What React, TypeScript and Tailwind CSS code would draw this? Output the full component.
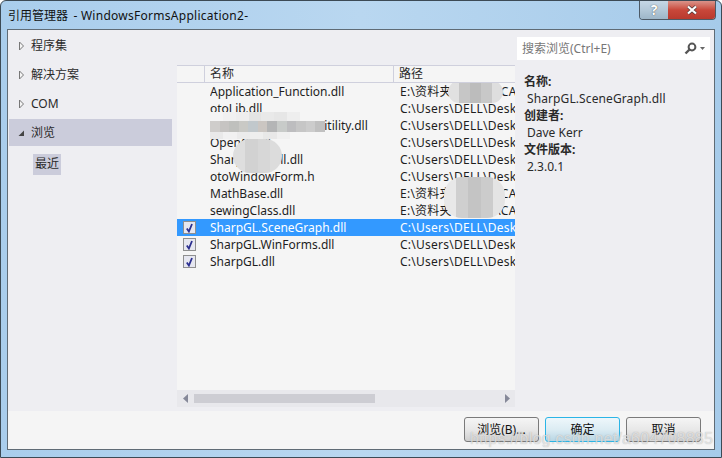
const font = "font-['Noto_Sans','Noto_Sans_CJK_SC',sans-serif]";

type Row = { name: string; path: string; checked?: boolean; selected?: boolean };

const rows: Row[] = [
  { name: "Application_Function.dll", path: "E:\\资料夹\\xxxxxx\\CAD" },
  { name: "otoLib.dll", path: "C:\\Users\\DELL\\Desktop" },
  { name: "xxxxxxxxxxxxxxxxxxitility.dll", path: "C:\\Users\\DELL\\Desktop" },
  { name: "OpenCv.dll", path: "C:\\Users\\DELL\\Desktop" },
  { name: "SharpGLxxxill.dll", path: "C:\\Users\\DELL\\Desktop" },
  { name: "otoWindowForm.h", path: "C:\\Users\\DELL\\Desktop" },
  { name: "MathBase.dll", path: "E:\\资料夹\\xxxxxx\\CAD" },
  { name: "sewingClass.dll", path: "E:\\资料夹\\xxxxxx\\CAD" },
  { name: "SharpGL.SceneGraph.dll", path: "C:\\Users\\DELL\\Desktop", checked: true, selected: true },
  { name: "SharpGL.WinForms.dll", path: "C:\\Users\\DELL\\Desktop", checked: true },
  { name: "SharpGL.dll", path: "C:\\Users\\DELL\\Desktop", checked: true },
];

function Arrow({ open }: { open?: boolean }) {
  return (
    <svg width="7" height="10" viewBox="0 0 7 10" className="shrink-0">
      {open ? (
        <path d="M6 2.5V8H0.5Z" fill="#444" />
      ) : (
        <path d="M1.5 1L5.5 5L1.5 9Z" fill="#f5f5f5" stroke="#777" />
      )}
    </svg>
  );
}

function NavItem({ label, open, active }: { label: string; open?: boolean; active?: boolean }) {
  return (
    <div className={`flex h-[27px] items-center pl-[9px] ${active ? "bg-[#cbccdb]" : ""}`}>
      <Arrow open={open} />
      <span className="ml-[6px] text-[12px] text-[#2a2a2a]">{label}</span>
    </div>
  );
}

function Check() {
  return (
    <span className="flex h-[13px] w-[13px] items-center justify-center border border-[#8f8f8f] bg-[#e6e7f0]">
      <svg width="9" height="10" viewBox="0 0 9 10">
        <path d="M1.8 5.5L3.9 8.5L7 1" fill="none" stroke="#2b2f8f" strokeWidth="1.8" />
      </svg>
    </span>
  );
}

function Mosaic({ className, shades }: { className: string; shades: string[] }) {
  return (
    <div className={`absolute flex overflow-hidden ${className}`}>
      {shades.map((shade, i) => (
        <span key={i} className="h-full flex-1" style={{ background: shade }} />
      ))}
    </div>
  );
}

function DialogButton({ label, primary }: { label: string; primary?: boolean }) {
  return (
    <button
      type="button"
      className={`h-[25px] w-[75px] rounded-[3px] border text-[12px] text-[#111] ${
        primary
          ? "border-[#2bb5e6] bg-gradient-to-b from-[#eef7fb] via-[#dcecf3] to-[#b8d6e4]"
          : "border-[#7a7a7a] bg-gradient-to-b from-[#f5f5f5] via-[#e8e8e8] to-[#cfcfcf]"
      }`}
    >
      {label}
    </button>
  );
}

export default function App() {
  return (
    <div className={`${font} relative flex h-[458px] w-[722px] flex-col overflow-hidden rounded-t-[6px] border border-[#3c4a55] bg-gradient-to-r from-[#a9cdec] via-[#b9d7f0] to-[#a6cbea] px-[6px] pb-[7px]`}>
      {/* title bar */}
      <div className="flex h-[28px] shrink-0 items-start justify-between">
        <span className="mt-[5px] pl-[1px] text-[12px] leading-[20px] text-[#111]">
          引用管理器<span className="ml-[2px] tracking-[0.27px]"> - WindowsFormsApplication2-</span>
        </span>
        <div className="mr-[-1px] flex h-[19px] overflow-hidden rounded-b-[4px] border border-t-0 border-[#4d5a66]">
          <div className="flex w-[28px] items-center justify-center bg-gradient-to-b from-[#c5d7e6] via-[#b3c8d8] to-[#9db6c8] text-[14px] font-bold leading-none text-white [text-shadow:0_0_1px_#222]">?</div>
          <div className="flex w-[47px] items-center justify-center bg-gradient-to-b from-[#d9938a] via-[#c8473a] to-[#b93a2e]">
            <svg width="12" height="10" viewBox="0 0 12 10">
              <path d="M2 1.5L10 8.5M10 1.5L2 8.5" stroke="#4b3a3a" strokeWidth="3.6" />
              <path d="M2 1.5L10 8.5M10 1.5L2 8.5" stroke="#fff" strokeWidth="2.2" />
            </svg>
          </div>
        </div>
      </div>

      {/* client area */}
      <div className="flex min-h-0 flex-1 flex-col border border-[#5f6b75] bg-[#eeeef2]">
        <div className="flex min-h-0 flex-1">
          <nav className="flex w-[169px] shrink-0 flex-col pt-[2px] pl-[1px]">
            <div className="pr-[5px]">
              <NavItem label="程序集" />
            </div>
            <div className="mt-[2px] pr-[5px]">
              <NavItem label="解决方案" />
            </div>
            <div className="mt-[2px] pr-[5px]">
              <NavItem label="COM" />
            </div>
            <div className="mt-[2px] pr-[5px]">
              <NavItem label="浏览" open active />
            </div>
            <div className="mt-[4px] pl-[24px]">
              <span className="inline-flex h-[21px] w-[28px] items-center justify-center bg-[#cbccdb] text-[12px] text-[#2a2a2a]">最近</span>
            </div>
          </nav>

          {/* file list */}
          <div className="flex w-[338px] shrink-0 flex-col pt-[35px]">
            <div className="flex min-h-0 flex-1 flex-col bg-[#f5f5f5]">
              <div className="flex h-[18px] shrink-0 border-t border-b border-[#cfd0dd] text-[12px] leading-[16px] text-[#2a2a2a]">
                <div className="w-[28px] shrink-0 border-r border-[#cfd0dd]" />
                <div className="w-[189px] shrink-0 border-r border-[#cfd0dd] pl-[5px]">名称</div>
                <div className="pl-[5px]">路径</div>
              </div>
              <div className="relative min-h-0 flex-1 overflow-hidden">
                {rows.map((row) => (
                  <div
                    key={row.name}
                    className={`flex h-[17px] items-center text-[12px] leading-[17px] ${
                      row.selected ? "bg-[#3399ff] text-white" : "text-[#1e1e1e]"
                    }`}
                  >
                    <div className="flex w-[33px] shrink-0 justify-start pl-[6px]">{row.checked && <Check />}</div>
                    <div className="w-[190px] shrink-0 truncate">{row.name}</div>
                    <div className="min-w-0 flex-1 overflow-hidden whitespace-nowrap tracking-[0.25px]">{row.path}</div>
                  </div>
                ))}
                {/* blurred-out parts of the screenshot */}
                <Mosaic className="left-[33px] top-[29px] h-[9px] w-[90px]" shades={["#f5f5f5", "#f1f1f1", "#eeeeee", "#e4e4e4", "#e9e9e9", "#e6e6e6", "#eeeeee"]} />
                <Mosaic className="left-[33px] top-[38px] h-[11px] w-[115px]" shades={["#cfcdcb", "#c6c4c2", "#bfc0bd", "#c9c9c5", "#c1c8cc", "#cbc6c2", "#b4b5b6", "#c8cbc9", "#bdbdbf", "#c6c6c6", "#cccccc", "#c0c0c0"]} />
                <Mosaic className="left-[33px] top-[49px] h-[7px] w-[80px]" shades={["#e9e9e9", "#f1f1f1", "#ebebeb", "#eeeeee", "#e8e8e8", "#f0f0f0"]} />
                <Mosaic className="left-[56px] top-[56px] h-[34px] w-[49px] rounded-[20px]" shades={["#dedede", "#d2d2d2", "#d7d7d7", "#dcdcdc"]} />
                <Mosaic className="left-[271px] top-[-2px] h-[22px] w-[55px] rounded-[11px]" shades={["#e1e1e1", "#c6c6c6", "#bcbcbc", "#c8c8c8", "#dedede"]} />
                <Mosaic className="left-[267px] top-[94px] h-[41px] w-[61px] rounded-[18px]" shades={["#e8e8e8", "#cfcfcf", "#c4c4c4", "#cccccc", "#e4e4e4"]} />
              </div>
              <div className="flex h-[17px] shrink-0 items-center bg-[#e8e8ec] px-[6px]">
                <svg width="6" height="9" viewBox="0 0 6 9">
                  <path d="M5 0V9L0 4.5Z" fill="#868999" />
                </svg>
                <div className="ml-[5px] h-[9px] w-[181px] bg-[#cdcdd3]" />
                <svg width="6" height="9" viewBox="0 0 6 9" className="ml-auto mr-[-1px]">
                  <path d="M1 0V9L6 4.5Z" fill="#868999" />
                </svg>
              </div>
            </div>
            <div className="h-[4px] shrink-0" />
          </div>

          {/* details */}
          <div className="flex min-w-0 flex-1 flex-col pt-[7px] text-[12px] leading-[17px] text-[#2a2a2a]">
            <div className="ml-[2px] mr-[4px] flex h-[23px] items-center justify-between bg-white pl-[5px] pr-[5px]">
              <span className="text-[12px] text-[#777]">搜索浏览(Ctrl+E)</span>
              <span className="flex items-center gap-[3px]">
                <svg width="13" height="13" viewBox="0 0 13 13">
                  <circle cx="8" cy="5" r="3.4" fill="none" stroke="#555" strokeWidth="2" />
                  <path d="M5.5 7.5L1.5 11.5" stroke="#555" strokeWidth="2.4" />
                </svg>
                <svg width="5" height="3" viewBox="0 0 5 3">
                  <path d="M0 0H5L2.5 3Z" fill="#666" />
                </svg>
              </span>
            </div>
            <div className="mt-[13px] pl-[9px]">
              <div className="font-bold">名称:</div>
              <div className="pl-[3px] tracking-[0.1px]">SharpGL.SceneGraph.dll</div>
              <div className="font-bold">创建者:</div>
              <div className="pl-[3px]">Dave Kerr</div>
              <div className="font-bold">文件版本:</div>
              <div className="pl-[3px]">2.3.0.1</div>
            </div>
          </div>
        </div>

        {/* footer buttons */}
        <div className="flex h-[38px] shrink-0 items-start justify-end gap-[6px] bg-[#f5f5f5] pt-[6px] pr-[13px]">
          <DialogButton label="浏览(B)..." />
          <DialogButton label="确定" primary />
          <DialogButton label="取消" />
        </div>
      </div>

      {/* watermark */}
      <span className="absolute right-[8px] top-[428px] font-['Liberation_Sans',sans-serif] text-[16px] leading-[20px] tracking-[0.2px] text-white/60 [text-shadow:0_0_1px_rgba(110,110,110,0.55)]">https://blog.csdn.net/a604708885</span>
    </div>
  );
}
